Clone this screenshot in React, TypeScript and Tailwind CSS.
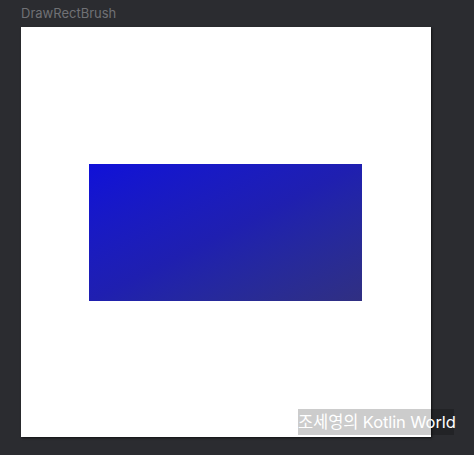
export default function App() {
  return (
    <div className="relative w-[474px] h-[455px] bg-[#2b2c30] overflow-hidden" style={{ fontFamily: '"Inter", "Noto Sans CJK KR", sans-serif' }}>
      <div className="pl-[21px] pt-[3px]">
        <div className="h-[24px] text-[13px] leading-[20px] text-[#707175]">DrawRectBrush</div>
        <div className="w-[410px] h-[410px] bg-white flex items-center justify-center shadow-[1px_1px_2px_rgba(0,0,0,0.6)]">
          <div className="w-[273px] h-[137px] ml-[-2px] bg-gradient-to-br from-[#1010d8] via-[#1f1fb0] to-[#302f82]" />
        </div>
      </div>
      <div className="absolute left-[298px] top-[409px] h-[26px] w-[156px] bg-black/20 flex items-center">
        <span className="text-white text-[16.5px] leading-none tracking-[-0.1px] whitespace-nowrap">조세영의 Kotlin World</span>
      </div>
    </div>
  );
}
